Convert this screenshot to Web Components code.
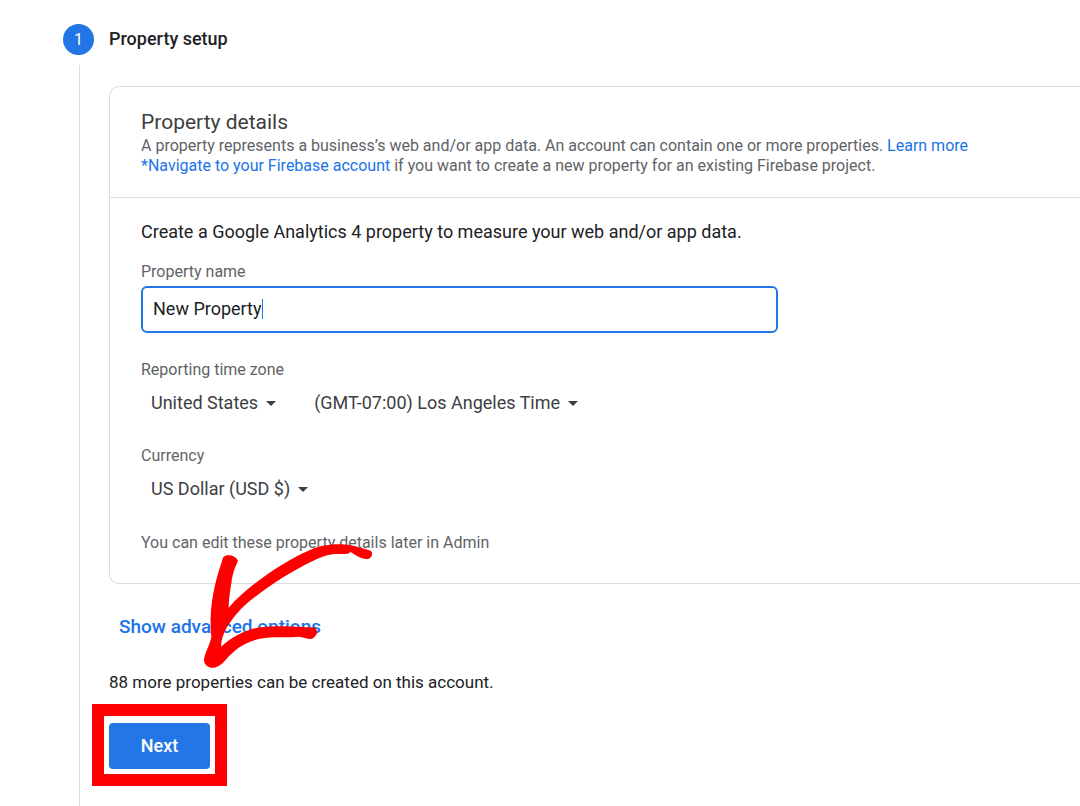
<!DOCTYPE html>
<html lang="en">
<head>
<meta charset="utf-8">
<meta name="viewport" content="width=device-width, initial-scale=1">
<title>Property setup</title>
<style>
  body {
    margin: 0;
    background: #fff;
    color: #202124;
    font-family: Roboto, "Liberation Sans", sans-serif;
    --blue: #2376e5;
    --link: #1a73e8;
    --muted: #5f6368;
    --rule: #dadce0;
    --mark: #fe0000;
  }
</style>
</head>
<body>
<setup-step number="1" heading="Property setup">
  <details-card>
    <card-intro slot="intro"></card-intro>
    <text-field label="Property name" value="New Property"></text-field>
    <select-group label="Reporting time zone" options="United States|(GMT-07:00) Los Angeles Time"></select-group>
    <select-group label="Currency" options="US Dollar (USD $)"></select-group>
    <span slot="note">You can edit these property details later in Admin</span>
  </details-card>
  <advanced-toggle>Show advanced options</advanced-toggle>
  <quota-note>88 more properties can be created on this account.</quota-note>
  <marked-button>Next</marked-button>
</setup-step>

<script>
const define = (name, render) => customElements.define(name, class extends HTMLElement {
  connectedCallback() {
    if (this.shadowRoot) return;
    this.attachShadow({ mode: "open" }).innerHTML = render(this);
  }
});

define("setup-step", el => `
  <style>
    :host { display: grid; grid-template-columns: 32px minmax(0, 1fr); grid-template-rows: 31px 1fr;
            column-gap: 14px; row-gap: 10px; box-sizing: border-box; min-height: 100vh;
            padding: 24px 0 0 63px; overflow: hidden; }
    .number { display: grid; place-items: center; width: 31px; border-radius: 50%; background: var(--blue);
              color: #fff; font-size: 16px; }
    h1 { margin: 0; font-size: 18px; line-height: 30px; font-weight: 500; }
    .line { justify-self: center; width: 1px; background: var(--rule); }
    .content { padding: 21px 0 20px; }
  </style>
  <div class="number">${el.getAttribute("number")}</div>
  <h1>${el.getAttribute("heading")}</h1>
  <div class="line"></div>
  <div class="content"><slot></slot></div>`);

define("details-card", () => `
  <style>
    :host { display: block; border: 1px solid var(--rule); border-right: 0; border-radius: 10px 0 0 10px; }
    .intro { padding: 22px 31px 21px; border-bottom: 1px solid var(--rule); }
    .body { padding: 22px 31px 30px; }
    h3 { margin: 0 0 18px; font-size: 18px; line-height: 24px; font-weight: 400; }
    .note { margin: 32px 0 0; font-size: 16px; line-height: 20px; color: var(--muted); }
  </style>
  <div class="intro"><slot name="intro"></slot></div>
  <div class="body">
    <h3>Create a Google Analytics 4 property to measure your web and/or app data.</h3>
    <slot></slot>
    <p class="note"><slot name="note"></slot></p>
  </div>`);

define("card-intro", () => `
  <style>
    :host { display: block; }
    h2 { margin: 0 0 1px; font: 400 21px/26px Roboto, sans-serif; color: #3c4043; }
    p { margin: 0; font-size: 16px; line-height: 20px; color: var(--muted); }
    a { color: var(--link); text-decoration: none; }
  </style>
  <h2>Property details</h2>
  <p>A property represents a business’s web and/or app data. An account can contain one or more properties. <a href="#learn">Learn more</a><br>
  <a href="#firebase">*Navigate to your Firebase account</a> if you want to create a new property for an existing Firebase project.</p>`);

define("text-field", el => `
  <style>
    :host { display: block; margin-bottom: 27px; }
    label { display: block; margin-bottom: 4px; font-size: 16px; line-height: 20px; color: var(--muted); }
    .box { display: flex; align-items: center; box-sizing: border-box; max-width: 637px; height: 47px;
           padding: 0 10px 2px; border: 2px solid var(--blue); border-radius: 6px; }
    input { field-sizing: content; padding: 0; border: 0; outline: 0; background: none;
            font: 18px/24px Roboto, sans-serif; color: #202124; caret-color: transparent; }
    .caret { width: 1px; height: 20px; background: var(--link); }
  </style>
  <label for="f">${el.getAttribute("label")}</label>
  <div class="box"><input id="f" type="text" value="${el.getAttribute("value")}"><span class="caret"></span></div>`);

define("select-group", el => `
  <style>
    :host { display: block; }
    :host(:not(:last-of-type)) { margin-bottom: 31px; }
    .label { font-size: 16px; line-height: 20px; color: var(--muted); }
    .row { display: flex; gap: 38px; margin: 11px 0 0 10px; }
    .pick { display: grid; align-items: center; }
    .pick > * { grid-area: 1 / 1; }
    select { appearance: none; field-sizing: content; height: 24px; padding: 0 18px 0 0; border: 0;
             background: none; font: 18px/24px Roboto, sans-serif; color: #3c4043; }
    .arrow { justify-self: end; border: 5px solid transparent; border-top-color: #3c4043;
             border-bottom: 0; pointer-events: none; }
  </style>
  <div class="label" id="l">${el.getAttribute("label")}</div>
  <div class="row">${el.getAttribute("options").split("|").map(o =>
    `<span class="pick"><select aria-labelledby="l"><option>${o}</option></select><span class="arrow"></span></span>`).join("")}</div>`);

define("advanced-toggle", () => `
  <style>
    :host { display: block; position: relative; margin-top: 31px; }
    button { display: block; margin: 0; padding: 0 10px; border: 0; background: none;
             font: 500 19px/24px Roboto, sans-serif; color: var(--link); }
    svg { position: absolute; left: 94px; top: -72px; fill: var(--mark); pointer-events: none; }
  </style>
  <button type="button"><slot></slot></button>
  <svg width="170" height="125" viewBox="39 39 510 375" aria-hidden="true">
    <path d="M97 90C100 75 110 75 120 76C132 78 142 85 144 93C135 112 128 128 124 160C119 190 117 210 116 233C180 160 290 90 360 60C400 42 450 40 482 46C500 50 530 58 543 63C550 72 545 82 537 86C525 90 505 82 482 66C475 74 460 72 440 72C420 72 395 80 370 92C290 130 200 190 150 240C115 280 95 310 93 350C130 318 175 292 230 290C290 286 330 292 372 292C380 297 384 306 380 312C376 320 370 326 363 327C350 326 340 322 325 320C290 324 250 318 210 326C160 338 130 362 105 392C92 408 75 415 62 413C48 410 42 400 42 388C46 365 60 345 64 322C62 300 61 280 62 260C64 200 80 140 97 90Z"/>
  </svg>`);

define("quota-note", () => `
  <style>
    :host { display: block; margin: 31px 0 10px; font-size: 17px; line-height: 24px; }
  </style>
  <slot></slot>`);

define("marked-button", () => `
  <style>
    :host { display: block; width: fit-content; margin-left: -17px; padding: 7px 5px 5px;
            border: 12px solid var(--mark); }
    button { display: block; min-width: 101px; height: 46px; margin: 0; border: 0; border-radius: 4px;
             background: var(--blue); font: 500 18px/24px Roboto, sans-serif; color: #fff; }
  </style>
  <button type="button"><slot></slot></button>`);
</script>
</body>
</html>
